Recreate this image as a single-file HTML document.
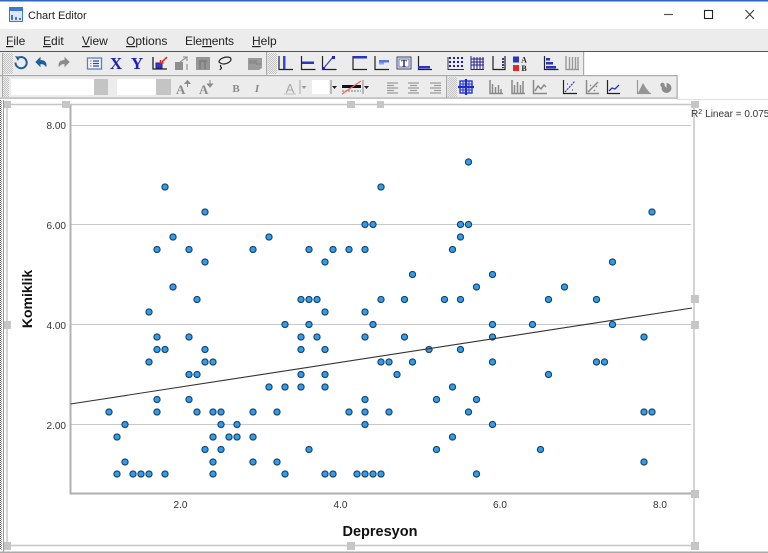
<!DOCTYPE html>
<html><head><meta charset="utf-8"><style>
html,body{margin:0;padding:0;background:#fff;width:768px;height:553px;overflow:hidden}
svg{display:block;font-family:"Liberation Sans",sans-serif;filter:blur(.35px)}
.p circle{r:3.1px}
</style></head><body>
<svg width="768" height="553" viewBox="0 0 768 553" xmlns="http://www.w3.org/2000/svg">
<defs>
<pattern id="grip" width="2" height="2" patternUnits="userSpaceOnUse"><rect width="2" height="2" fill="#ececec"/><rect width="1" height="1" fill="#c4c4c4"/><rect x="1" y="1" width="1" height="1" fill="#c4c4c4"/></pattern>
<pattern id="dots" width="2" height="2" patternUnits="userSpaceOnUse"><rect width="2" height="2" fill="#fff"/><rect width="1" height="1" fill="#555"/><rect x="1" y="1" width="1" height="1" fill="#999"/></pattern>
<path id="ax" d="M0 1V14.500H14" fill="none" stroke="#222" stroke-width="1.200"/>
</defs>
<rect width="768" height="553" fill="#fff"/>
<rect width="768" height="1.500" fill="#2a66c4"/>
<!-- title -->
<rect x="9" y="7" width="14" height="15" fill="#3f77d0"/><rect x="10" y="11" width="12" height="10" fill="#dce8fa"/><rect x="11" y="15" width="2" height="5" fill="#3f77d0"/><rect x="15" y="17" width="2" height="3" fill="#3f77d0"/><rect x="19" y="18" width="2" height="2" fill="#3f77d0"/>
<text x="28" y="19" font-size="11" fill="#222">Chart Editor</text>
<path d="M664 14.500h9" stroke="#555" stroke-width="1.200"/>
<rect x="704.500" y="10.500" width="8" height="8" fill="none" stroke="#222" stroke-width="1.100"/>
<path d="M745.500 10l8.500 9M754 10l-8.500 9" stroke="#333" stroke-width="1"/>
<!-- menu -->
<rect y="29" width="768" height="22" fill="#ececec"/>
<g font-size="12" fill="#222">
<text x="6" y="45"><tspan text-decoration="underline">F</tspan>ile</text>
<text x="43" y="45"><tspan text-decoration="underline">E</tspan>dit</text>
<text x="82" y="45"><tspan text-decoration="underline">V</tspan>iew</text>
<text x="126" y="45"><tspan text-decoration="underline">O</tspan>ptions</text>
<text x="185" y="45" textLength="49">Ele<tspan text-decoration="underline">m</tspan>ents</text>
<text x="252" y="45"><tspan text-decoration="underline">H</tspan>elp</text>
</g>
<rect y="51" width="768" height="1" fill="#555"/>
<!-- toolbars bg -->
<rect x="0" y="52" width="583" height="23" fill="#ececec"/>
<rect x="0" y="75" width="677" height="23" fill="#ececec"/>
<rect x="0" y="75" width="584" height="1.200" fill="#aaa"/>
<rect x="583" y="52" width="1.200" height="24" fill="#aaa"/>
<rect x="584" y="75" width="93" height="1.200" fill="#aaa"/>
<rect x="676.500" y="75" width="1.200" height="24" fill="#aaa"/>
<rect x="0" y="97.500" width="677" height="1.200" fill="#aaa"/>
<rect x="677" y="99" width="91" height="1" fill="#e0e0e0"/>
<rect x="266" y="52" width="1.200" height="23" fill="#aaa"/>
<rect x="446" y="76" width="1.200" height="22" fill="#aaa"/>
<rect x="2" y="53" width="1" height="44" fill="#aaa"/>
<rect x="3" y="53" width="10" height="21" fill="url(#grip)"/>
<rect x="3" y="77" width="6" height="20" fill="url(#grip)"/>
<rect x="268" y="53" width="9" height="21" fill="url(#grip)"/>
<rect x="448" y="77" width="9" height="20" fill="url(#grip)"/>
<!-- row 1 group 1 -->
<path d="M18 58a5.600 5.600 0 1 1-2.500 4.500" fill="none" stroke="#1f5f9f" stroke-width="2"/><path d="M15 56l5 1-2 4z" fill="#1f5f9f"/>
<path d="M40 58l-4 4 4 4v-2.500c3 0 5 .5 6 3 .3-4-1.500-6-6-6z" fill="#1f5f9f" stroke="#1f5f9f"/>
<path d="M65 58l4 4-4 4v-2.500c-3 0-5 .5-6 3-.3-4 1.500-6 6-6z" fill="#8c8c8c" stroke="#8c8c8c"/>
<rect x="87.500" y="58" width="14" height="11" fill="#f4f8ff" stroke="#4a86c8" stroke-width="1.300"/>
<path d="M90 61h1.500M90 63.500h1.500M90 66h1.500" stroke="#e08020" stroke-width="1.200"/><path d="M93 61h6M93 63.500h6M93 66h6" stroke="#3040c0" stroke-width="1.200"/>
<text x="116" y="69" font-family="Liberation Serif,serif" font-weight="700" font-size="17" fill="#1d22b4" text-anchor="middle">X</text>
<text x="137" y="69" font-family="Liberation Serif,serif" font-weight="700" font-size="17" fill="#1d22b4" text-anchor="middle">Y</text>
<path d="M153 57V69H167" fill="none" stroke="#222" stroke-width="1.300"/>
<rect x="156" y="63" width="6" height="5" fill="#3838c8" stroke="#2020a0"/>
<path d="M167 57l-5 5M160.500 60v3h3" stroke="#e82020" stroke-width="1.500" fill="none"/>
<rect x="175" y="62" width="8" height="8" fill="#8e8e8e"/><path d="M180 62l7-5M183 57h4v4M187 64v6" stroke="#999" stroke-width="1.300" fill="none"/>
<rect x="196" y="57" width="14" height="13" fill="#959595"/><path d="M199 61h8M200 61v8M205 61v8" stroke="#777" stroke-width="1.200" fill="none"/>
<path d="M219 62c0-3 5-5 8-5 3 0 4 1 4 2.500 0 2-4 4.500-7 4.500-2 0-4-1-5-2zM221 65c-2 2 1 2 .5 3-.5 1-1.500 1.500-1.500 2" fill="none" stroke="#222" stroke-width="1.200"/>
<path d="M248 58h14v10l-3 2h-11z" fill="#9b9b9b"/><path d="M250 61h6v2h-6zM256 64h5" stroke="#808080" fill="none"/>
<!-- row 1 group 2 -->
<use href="#ax" x="279" y="55"/><rect x="283" y="56" width="2.500" height="13" fill="#3a46d8"/>
<use href="#ax" x="301.500" y="55"/><rect x="302" y="61.500" width="12" height="2.500" fill="#2a34c8"/>
<use href="#ax" x="322.500" y="55"/><path d="M323 69l10-12" stroke="#3848e0" stroke-width="1.300"/><rect x="322" y="67" width="3" height="3" fill="#2020d0"/><rect x="332" y="56" width="3" height="3" fill="#2020d0"/>
<use href="#ax" x="353" y="55"/><rect x="353" y="56" width="14" height="2.500" fill="#2a34c8"/>
<use href="#ax" x="375" y="55"/><rect x="379" y="60" width="10" height="2.500" fill="#5a78e0"/><rect x="379" y="62.500" width="5" height="2" fill="#88a0ee"/>
<rect x="397" y="57" width="14" height="12" fill="#eef" stroke="#444" stroke-width="1"/><rect x="399" y="59" width="10" height="8" fill="#fff" stroke="#6070d8"/>
<text x="404" y="66.500" font-family="Liberation Serif,serif" font-weight="700" font-size="9" fill="#222" text-anchor="middle">T</text>
<path d="M418.500 56V69.500H432" fill="none" stroke="#222" stroke-width="1.200"/><rect x="418" y="66" width="12" height="2.500" fill="#2a34c8"/>
<path d="M449 57h2v2h-2zM453 57h2v2h-2zM457 57h2v2h-2zM461 57h2v2h-2zM449 61h2v2h-2zM453 61h2v2h-2zM457 61h2v2h-2zM461 61h2v2h-2zM449 65h2v2h-2zM453 65h2v2h-2zM457 65h2v2h-2zM461 65h2v2h-2z" fill="#2020a0"/><path d="M448 57V69.500H464" fill="none" stroke="#333"/>
<path d="M471 56V69.500H484M471 59h13M471 62h13M471 65h13M474 57v12M477 57v12M480 57v12M483 57v12" fill="none" stroke="#22228c" stroke-width="1"/>
<path d="M493 56V69.500H505V56" fill="none" stroke="#222" stroke-width="1.200"/><path d="M503 58v10" stroke="#2a34c8" stroke-width="2" stroke-dasharray="2 1"/>
<rect x="513" y="56.500" width="6" height="6" fill="#2a34c8"/><rect x="513" y="65" width="6" height="6" fill="#e02828"/>
<text x="524" y="62.500" font-family="Liberation Serif,serif" font-weight="700" font-size="8" fill="#222" text-anchor="middle">A</text><text x="524" y="71" font-family="Liberation Serif,serif" font-weight="700" font-size="8" fill="#222" text-anchor="middle">B</text>
<use href="#ax" x="544.500" y="55"/><rect x="546" y="58" width="4" height="2.500" fill="#2a34c8"/><rect x="546" y="62" width="7" height="2.500" fill="#2a34c8"/><rect x="546" y="66" width="10" height="2.500" fill="#2a34c8"/>
<path d="M566 56V69.500H579M569.500 57v12M572.500 57v12M575.500 57v12M578 57v12" fill="none" stroke="#9a9a9a" stroke-width="1.400"/>
<!-- row 2 -->
<rect x="11" y="79" width="83" height="16" fill="#fff"/><rect x="94" y="79" width="14" height="16" fill="#c4c4c4"/>
<rect x="117" y="79" width="39" height="16" fill="#fff"/><rect x="156" y="79" width="15" height="16" fill="#c4c4c4"/>
<g font-family="Liberation Serif,serif" font-weight="700" fill="#8a8a8a">
<text x="176" y="94" font-size="13">A</text><text x="199" y="94" font-size="13">A</text>
<text x="236" y="92" font-size="11" text-anchor="middle">B</text>
<text x="257" y="92" font-size="11" font-style="italic" text-anchor="middle">I</text>
</g>
<path d="M187.500 87v-5M185 83.500l2.500-3 2.500 3z" stroke="#8a8a8a" fill="#8a8a8a"/>
<path d="M210 80v5M207.500 84l2.500 3 2.500-3z" stroke="#8a8a8a" fill="#8a8a8a"/>
<text x="290" y="93" font-size="13" fill="#a8a8a8" text-anchor="middle">A</text>
<path d="M284 94h12" stroke="#bbb"/><path d="M300 80v14" stroke="#aaa"/><path d="M301.500 86h5l-2.500 3z" fill="#999"/>
<rect x="312" y="80" width="17" height="14" fill="#fff"/>
<path d="M331 80v14" stroke="#888"/><path d="M332 86h5l-2.500 3z" fill="#222"/>
<rect x="342" y="85" width="19" height="3" fill="#111"/><path d="M342 91h19" stroke="#777" stroke-dasharray="2 1"/><path d="M342 94l19-13" stroke="#f06060" stroke-width="1.200"/>
<path d="M363 80v14" stroke="#888"/><path d="M364 86h5l-2.500 3z" fill="#222"/>
<path d="M387 83h11M387 85.500h7M387 88h11M387 90.500h7M387 93h11M408 83h11M410 85.500h7M408 88h11M410 90.500h7M408 93h11M430 83h11M434 85.500h7M430 88h11M434 90.500h7M430 93h11" stroke="#9c9c9c" stroke-width="1.200" fill="none"/>
<rect x="460" y="81" width="12" height="12" fill="none" stroke="#1a2ad0" stroke-width="1.300"/><path d="M458 87h16M466 79v16" stroke="#1a2ad0" stroke-width="2.200"/><path d="M460 84h12M460 90h12M463 81v12M469 81v12" stroke="#2a34c8"/>
<g fill="none" stroke="#8a8a8a" stroke-width="1.500">
<path d="M490 80V93.500H503M492.500 84v9M495.500 87v6M498.500 85v8M501 89v4"/>
<path d="M512 80V93.500H525M514.500 85v8M517.500 82v11M520.500 85v8M523 81v12"/>
<path d="M533.500 80V93.500H547M535 91l3-5 3 3 3-4 2 2"/>
<path d="M586.500 80V93.500H599M588 92l10-10M590 85l1 1M594 90l1 1M596 86l1 1"/>
</g>
<path d="M563.500 80V93.500H577" fill="none" stroke="#222" stroke-width="1.200"/><path d="M565 92l10-11" stroke="#3838c8" stroke-width="1.200" stroke-dasharray="2 1"/><path d="M567 84h1M572 90h1" stroke="#333"/>
<path d="M607.500 80V93.500H620" fill="none" stroke="#222" stroke-width="1.200"/><path d="M609 91l3-3 3 1 4-4" fill="none" stroke="#2a34c8" stroke-width="1.300"/>
<path d="M637.500 80V93.500H651" fill="none" stroke="#999" stroke-width="1.200"/><path d="M638 93l5-10 3 5 4 5z" fill="#959595"/>
<circle cx="666.500" cy="88" r="5" fill="#8c8c8c"/><path d="M666.500 88v-6h-5z" fill="#ececec"/><circle cx="662.500" cy="85" r="2.200" fill="#8c8c8c"/>
<!-- left dotted edge -->
<rect x="0" y="100" width="2" height="450" fill="url(#dots)"/>
<rect x="3" y="100" width="1" height="452" fill="#999"/>
<!-- frame -->
<path d="M7.500 104.500H694M7 105V546M7 545.500H694M694 104V546" fill="none" stroke="#c6c6c6" stroke-width="1.500"/>
<!-- gridlines -->
<path d="M71 125.500H691M71 224.500H691M71 324.500H691M71 424.500H691" stroke="#c8c8c8" stroke-width="1.100"/>
<!-- axes -->
<path d="M70.500 105V493.500H694" fill="none" stroke="#b0b0b0" stroke-width="2"/>
<!-- handles -->
<g fill="#c6c6c6">
<rect x="4" y="101" width="7" height="7"/><rect x="62" y="101" width="8" height="7"/><rect x="347" y="101" width="8" height="7"/><rect x="377" y="101" width="7" height="7"/><rect x="691" y="101" width="8" height="7"/>
<rect x="691" y="295" width="8" height="8"/><rect x="691" y="321" width="8" height="8"/><rect x="691" y="490" width="8" height="8"/><rect x="691" y="542" width="8" height="8"/>
<rect x="347" y="542" width="8" height="8"/><rect x="4" y="542" width="7" height="8"/><rect x="4" y="321" width="7" height="8"/>
</g>
<rect x="0" y="551.500" width="768" height="1.500" fill="#aaa"/>
<!-- tick labels -->
<g font-size="10" fill="#333">
<g text-anchor="end"><text x="66" y="129">8.00</text><text x="66" y="229">6.00</text><text x="66" y="329">4.00</text><text x="66" y="429">2.00</text></g>
<g text-anchor="middle"><text x="180.500" y="508">2.0</text><text x="340.500" y="508">4.0</text><text x="500" y="508">6.0</text><text x="660" y="508">8.0</text></g>
<text x="691" y="117">R<tspan font-size="7" dy="-3">2</tspan><tspan dy="3" dx="3">Linear = 0.075</tspan></text>
</g>
<text x="380" y="536" font-size="14.500" font-weight="700" fill="#111" text-anchor="middle">Depresyon</text>
<text transform="translate(32 299) rotate(-90)" font-size="14" font-weight="700" fill="#111" text-anchor="middle">Komiklik</text>
<!-- points -->
<g class="p" fill="#2a9ef2" stroke="#20415e" stroke-width="1.100">
<circle cx="165" cy="187"/><circle cx="205" cy="212"/><circle cx="173" cy="237"/><circle cx="157" cy="249.500"/><circle cx="189" cy="249.500"/><circle cx="205" cy="262"/><circle cx="173" cy="287"/><circle cx="197" cy="299.500"/><circle cx="149" cy="312"/><circle cx="253" cy="249.500"/>
<circle cx="157" cy="337"/><circle cx="189" cy="337"/><circle cx="157" cy="349.500"/><circle cx="165" cy="349.500"/><circle cx="205" cy="349.500"/><circle cx="149" cy="362"/><circle cx="205" cy="362"/><circle cx="213" cy="362"/><circle cx="189" cy="374.500"/><circle cx="197" cy="374.500"/><circle cx="157" cy="399.500"/><circle cx="189" cy="399.500"/><circle cx="109" cy="412"/><circle cx="157" cy="412"/><circle cx="197" cy="412"/><circle cx="213" cy="412"/><circle cx="221" cy="412"/><circle cx="253" cy="412"/><circle cx="125" cy="424.500"/><circle cx="221" cy="424.500"/><circle cx="237" cy="424.500"/><circle cx="117" cy="437"/><circle cx="213" cy="437"/><circle cx="229" cy="437"/><circle cx="237" cy="437"/><circle cx="253" cy="437"/><circle cx="205" cy="449.500"/><circle cx="221" cy="449.500"/><circle cx="125" cy="462"/><circle cx="213" cy="462"/><circle cx="253" cy="462"/><circle cx="117" cy="474"/><circle cx="133" cy="474"/><circle cx="141" cy="474"/><circle cx="149" cy="474"/><circle cx="165" cy="474"/><circle cx="213" cy="474"/>
<circle cx="285" cy="324.500"/><circle cx="309" cy="324.500"/><circle cx="373" cy="324.500"/><circle cx="492.500" cy="324.500"/><circle cx="301" cy="337"/><circle cx="317" cy="337"/><circle cx="365" cy="337"/><circle cx="404.500" cy="337"/><circle cx="492.500" cy="337"/><circle cx="301" cy="349.500"/><circle cx="325" cy="349.500"/><circle cx="429" cy="349.500"/><circle cx="460.500" cy="349.500"/><circle cx="381" cy="362"/><circle cx="389" cy="362"/><circle cx="412.500" cy="362"/><circle cx="492.500" cy="362"/><circle cx="301" cy="374.500"/><circle cx="325" cy="374.500"/><circle cx="397" cy="374.500"/><circle cx="269" cy="387"/><circle cx="285" cy="387"/><circle cx="301" cy="387"/><circle cx="325" cy="387"/><circle cx="452.500" cy="387"/><circle cx="365" cy="399.500"/><circle cx="436.500" cy="399.500"/><circle cx="476.500" cy="399.500"/><circle cx="277" cy="412"/><circle cx="349" cy="412"/><circle cx="365" cy="412"/><circle cx="389" cy="412"/><circle cx="468.500" cy="412"/><circle cx="365" cy="424.500"/><circle cx="492.500" cy="424.500"/><circle cx="452.500" cy="437"/><circle cx="309" cy="449.500"/><circle cx="436.500" cy="449.500"/><circle cx="277" cy="462"/><circle cx="285" cy="474"/><circle cx="325" cy="474"/><circle cx="333" cy="474"/><circle cx="357" cy="474"/><circle cx="365" cy="474"/><circle cx="373" cy="474"/><circle cx="381" cy="474"/><circle cx="476.500" cy="474"/>
<circle cx="532.500" cy="324.500"/><circle cx="612.500" cy="324.500"/><circle cx="644" cy="337"/><circle cx="596.500" cy="362"/><circle cx="604.500" cy="362"/><circle cx="548.500" cy="374.500"/><circle cx="644" cy="412"/><circle cx="652" cy="412"/><circle cx="540.500" cy="449.500"/><circle cx="644" cy="462"/>
<circle cx="468.500" cy="162"/><circle cx="381" cy="187"/><circle cx="365" cy="224.500"/><circle cx="373" cy="224.500"/><circle cx="460.500" cy="224.500"/><circle cx="468.500" cy="224.500"/><circle cx="269" cy="237"/><circle cx="460.500" cy="237"/><circle cx="309" cy="249.500"/><circle cx="333" cy="249.500"/><circle cx="349" cy="249.500"/><circle cx="365" cy="249.500"/><circle cx="452.500" cy="249.500"/><circle cx="325" cy="262"/><circle cx="412.500" cy="274.500"/><circle cx="492.500" cy="274.500"/><circle cx="476.500" cy="287"/><circle cx="301" cy="299.500"/><circle cx="309" cy="299.500"/><circle cx="317" cy="299.500"/><circle cx="381" cy="299.500"/><circle cx="404.500" cy="299.500"/><circle cx="444.500" cy="299.500"/><circle cx="460.500" cy="299.500"/><circle cx="325" cy="312"/><circle cx="365" cy="312"/>
<circle cx="652" cy="212"/><circle cx="612.500" cy="262"/><circle cx="564.500" cy="287"/><circle cx="548.500" cy="299.500"/><circle cx="596.500" cy="299.500"/>
</g>
<!-- fit line -->
<path d="M70.500 404L692 308" stroke="#333" stroke-width="1.100"/>
</svg>
</body></html>
